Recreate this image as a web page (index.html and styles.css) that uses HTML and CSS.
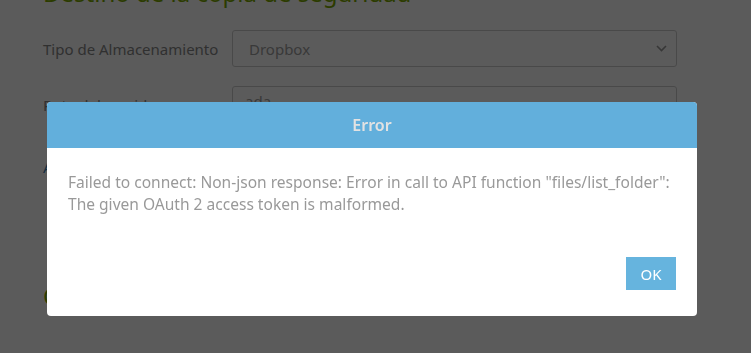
FILE: index.html
```html
<!DOCTYPE html>
<html lang="es">
<head>
<meta charset="utf-8">
<title>Destino de la copia de seguridad</title>
<link rel="stylesheet" href="styles.css">
</head>
<body>
<main class="page">
  <h2 class="section-title">Destino de la copia de seguridad</h2>
  <div class="form-row">
    <label class="form-label">Tipo de Almacenamiento</label>
    <div class="select">
      <span>Dropbox</span>
      <svg class="chev" width="11" height="7" viewBox="0 0 11 7"><path d="M1 1 L5.5 5.5 L10 1" fill="none" stroke="#9a9a9a" stroke-width="1.6"/></svg>
    </div>
  </div>
  <div class="form-row">
    <label class="form-label">Ruta del servidor:</label>
    <div class="input"><span>ada</span></div>
  </div>
  <a class="link">Añadir otra ruta</a>
  <h2 class="section-title second">Copia programada</h2>
</main>

<div class="overlay">
  <div class="modal">
    <div class="modal-header">Error</div>
    <div class="modal-body">Failed to connect: Non-json response: Error in call to API function "files/list_folder":<br>The given OAuth 2 access token is malformed.</div>
    <div class="modal-footer"><button class="btn-ok">OK</button></div>
  </div>
</div>
</body>
</html>
```

FILE: styles.css
```css
* { box-sizing: border-box; }
html, body { margin: 0; padding: 0; }
body {
  width: 751px;
  height: 353px;
  overflow: hidden;
  background: #ffffff;
  font-family: "Noto Sans", "Open Sans", sans-serif;
}
.page {
  padding-left: 43px;
  margin-top: -22px;
  width: 700px;
}
.section-title {
  margin: 0;
  font-size: 24px;
  font-weight: 400;
  line-height: 30px;
  color: #7ba800;
}
.section-title.second {
  margin-top: 104px;
}
.form-row {
  display: flex;
  align-items: center;
  margin-top: 22px;
}
.form-row + .form-row { margin-top: 19px; }
.form-label {
  width: 189px;
  font-size: 15px;
  color: #888888;
}
.select, .input {
  width: 445px;
  height: 37px;
  border: 1px solid #cdcdcd;
  border-radius: 3px;
  display: flex;
  align-items: center;
  justify-content: space-between;
  padding: 0 9px 0 16px;
  font-size: 15px;
  color: #a0a0a0;
}
.input { padding-left: 12px; align-items: flex-start; padding-top: 4px; }
.link {
  display: block;
  margin-top: 34px;
  font-size: 15px;
  color: #3b7db0;
}
.overlay {
  position: fixed;
  inset: 0;
  background: rgba(0, 0, 0, 0.643);
}
.modal {
  position: absolute;
  left: 47px;
  top: 102px;
  width: 650px;
  height: 214px;
  background: #ffffff;
  border-radius: 4px;
  display: flex;
  flex-direction: column;
  overflow: hidden;
}
.modal-header {
  height: 46px;
  background: #62afdc;
  color: #e2e2e2;
  font-weight: 600;
  font-size: 16px;
  display: flex;
  align-items: center;
  justify-content: center;
}
.modal-body {
  padding: 23px 21px 0;
  font-size: 15.55px;
  line-height: 22px;
  color: #999999;
  flex: 1;
}
.modal-footer {
  display: flex;
  justify-content: flex-end;
  padding: 0 21px 26px;
}
.btn-ok {
  width: 50px;
  height: 33px;
  border: 0;
  border-radius: 0;
  background: #66b4de;
  color: #ffffff;
  font-family: inherit;
  font-size: 15px;
  padding: 0;
}
```
